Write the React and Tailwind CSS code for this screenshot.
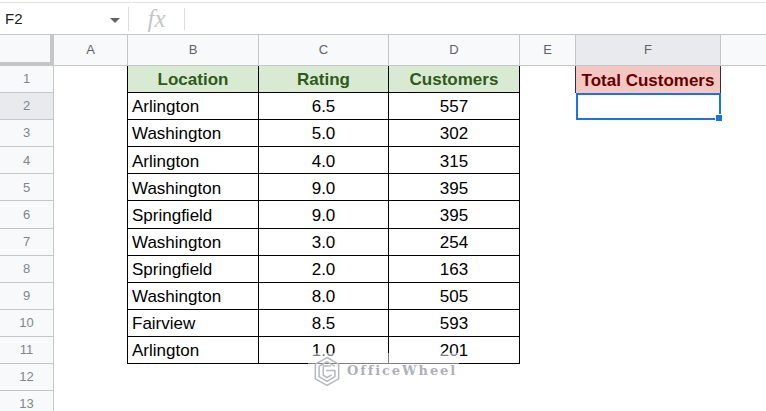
const rows = [
  ["Arlington", "6.5", "557"],
  ["Washington", "5.0", "302"],
  ["Arlington", "4.0", "315"],
  ["Washington", "9.0", "395"],
  ["Springfield", "9.0", "395"],
  ["Washington", "3.0", "254"],
  ["Springfield", "2.0", "163"],
  ["Washington", "8.0", "505"],
  ["Fairview", "8.5", "593"],
  ["Arlington", "1.0", "201"],
];

function ColHead({ label, active }) {
  return (
    <div className={`flex items-center justify-center border-r border-b border-[#c4c7c5] text-[13px] text-[#5f6368] ${active ? "bg-[#e8eaed]" : "bg-[#f8f9fa]"}`}>
      {label}
    </div>
  );
}

function RowHead({ n, active }) {
  return (
    <div className={`flex items-center justify-center border-r border-b border-[#c4c7c5] text-[13px] text-[#80868b] ${active ? "bg-[#e8eaed]" : "bg-[#f8f9fa]"}`}>
      {n}
    </div>
  );
}

function Watermark() {
  return (
    <div className="absolute left-[308px] top-[353px] flex h-[36px] items-center gap-[6px] bg-white/50 pl-[5px] pr-[2px]">
      <svg width="28" height="33" viewBox="0 0 30 34" fill="none" stroke="#b4b8c0" strokeWidth="1.6">
        <path d="M15 2 L27.5 9.2 V24.8 L15 32 L2.5 24.8 V9.2 Z" />
        <path d="M15 6.5 L23.5 11.5 M15 6.5 L6.5 11.5 V22.5 L15 27.5 L23.5 22.5 V16 L14 16" />
        <path d="M19 11 L11 11 V21 L15 23.5 L20 20.5" />
      </svg>
      <span className="font-['DejaVu_Serif',serif] text-[13px] font-semibold tracking-[1.9px] text-[#adb1ba]">OfficeWheel</span>
    </div>
  );
}

export default function App() {
  return (
    <div className="relative h-[411px] w-[766px] overflow-hidden bg-white font-['Liberation_Sans',sans-serif]">
      <div className="h-[3px] border-b border-[#e2e3e3] bg-white" />
      <div className="flex h-[32px] items-center border-b border-[#c4c7c5] bg-white">
        <div className="flex h-full w-[128px] items-center justify-between pl-[5px] pr-[8px] pt-[2px] text-[15px] text-[#202124]">
          <span>F2</span>
          <span className="mt-[2px] h-0 w-0 border-x-[5px] border-t-[5px] border-x-transparent border-t-[#5f6368]" />
        </div>
        <div className="h-[24px] w-px bg-[#dadce0]" />
        <div className="flex w-[55px] justify-center font-['Liberation_Serif',serif] text-[25px] italic leading-none text-[#c4c7c5]">fx</div>
        <div className="h-[22px] w-px bg-[#dadce0]" />
      </div>
      <div className="grid grid-cols-[54px_74px_131px_130px_131px_56px_145px_1fr] grid-rows-[31px_repeat(13,27.1px)]">
        <div className="border-r-[4px] border-b-[4px] border-[#c4c7c5] bg-[#f8f9fa]" />
        <ColHead label="A" />
        <ColHead label="B" />
        <ColHead label="C" />
        <ColHead label="D" />
        <ColHead label="E" />
        <ColHead label="F" active />
        <div className="border-b border-[#c4c7c5] bg-[#f8f9fa]" />

        <RowHead n={1} />
        <div className="border-r border-black" />
        <div className="flex items-center justify-center border-r border-b border-black bg-[#d9ead3] pt-[2px] text-[17px] font-bold text-[#2f5a1a]">Location</div>
        <div className="flex items-center justify-center border-r border-b border-black bg-[#d9ead3] pt-[2px] text-[17px] font-bold text-[#2f5a1a]">Rating</div>
        <div className="flex items-center justify-center border-r border-b border-black bg-[#d9ead3] pt-[2px] text-[17px] font-bold text-[#2f5a1a]">Customers</div>
        <div className="border-r border-[#333333]" />
        <div className="flex items-center justify-center border-r border-[#333333] bg-[#f4c7c3] pt-[2px] text-[17px] font-bold text-[#660000]">Total Customers</div>
        <div />

        {rows.map((r, i) => (
          <div key={i} className="contents">
            <RowHead n={i + 2} active={i === 0} />
            <div className="border-r border-black" />
            <div className="flex items-center border-r border-b border-black pl-[4px] pt-[2px] text-[17px] text-black">{r[0]}</div>
            <div className="flex items-center justify-center border-r border-b border-black pt-[2px] text-[17px] text-black">{r[1]}</div>
            <div className="flex items-center justify-center border-r border-b border-black pt-[2px] text-[17px] text-black">{r[2]}</div>
            <div />
            {i === 0 ? (
              <div className="relative border-2 border-[#1a73e8]">
                <span className="absolute -right-[4px] -bottom-[4px] h-[8px] w-[8px] border border-white bg-[#1a73e8]" />
              </div>
            ) : (
              <div />
            )}
            <div />
          </div>
        ))}

        <RowHead n={12} />
        <div className="col-span-7" />
        <RowHead n={13} />
        <div className="col-span-7" />
      </div>
      <Watermark />
    </div>
  );
}
